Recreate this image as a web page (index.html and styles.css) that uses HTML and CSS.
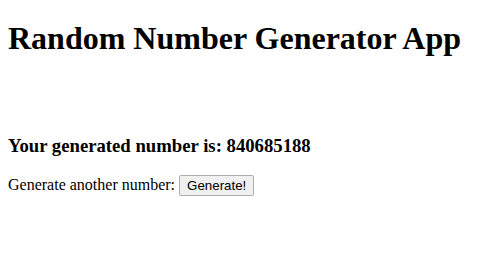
FILE: index.html
```html
<!DOCTYPE html>
<html>
<head>
<meta charset="utf-8">
<link rel="stylesheet" href="styles.css">
</head>
<body class="page">
<h1 class="title">Random Number Generator App</h1>
<div class="spacer"></div>
<h3 class="result">Your generated number is: 840685188</h3>
<form class="form">Generate another number: <button type="button" class="btn">Generate!</button></form>
</body>
</html>
```
FILE: styles.css
```css
.page {
  margin: 8px;
  font-family: "Liberation Serif", "Times New Roman", serif;
  font-size: 16px;
  color: #000;
  background: #fff;
}
.title {
  font-size: 32px;
  font-weight: bold;
  margin: 12px 0 21px;
}
.spacer {
  height: 38px;
}
.result {
  font-size: 18.72px;
  font-weight: bold;
  margin: 18.72px 0;
}
.form {
  margin: 0;
}
.btn {
  font-family: "Liberation Sans", Arial, sans-serif;
  font-size: 13.33px;
  color: #000;
  background: #f0f0f0;
  border: 1px solid #adadad;
  border-radius: 2px;
  padding: 2px 7px;
  margin: 0;
}
```
